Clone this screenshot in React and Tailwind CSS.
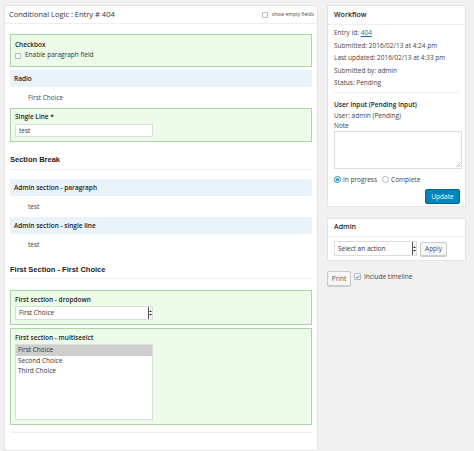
import React from 'react'

const font = { fontFamily: '"Open Sans", "Noto Sans", sans-serif' }

function GreenBox({ children, className = '' }) {
  return (
    <div className={`mx-[5px] border border-[#a9d6a4] bg-[#edfce9] px-[4px] ${className}`}>
      {children}
    </div>
  )
}

function FakeSelect({ value, className = '' }) {
  return (
    <div className={`flex items-stretch border border-[#dcdcdc] bg-white ${className}`}>
      <div className="flex flex-1 items-center pl-[3px] text-[6.5px] text-[#333]">{value}</div>
      <div className="flex w-[4px] items-center justify-center border-l border-[#555] bg-[#f7f7f7]">
        <svg width="3" height="6" viewBox="0 0 3 6">
          <path d="M0 2 L1.5 0.5 L3 2 Z M0 4 L1.5 5.5 L3 4 Z" fill="#222" />
        </svg>
      </div>
    </div>
  )
}

function BlueLabel({ children }) {
  return (
    <div className="mx-[5px] flex h-[17px] items-center bg-[#eaf2fa] px-[4px] text-[6.5px] font-semibold text-[#222]">
      {children}
    </div>
  )
}

function Value({ children }) {
  return <div className="flex h-[21px] items-center pl-[23px] text-[6.5px] text-[#444]">{children}</div>
}

function SectionHead({ children, className = '' }) {
  return (
    <div
      className={`mx-[5px] border-b border-[#eeeeee] text-[7.5px] font-bold text-[#222] ${className}`}
      style={{ fontFamily: '"Liberation Sans", Arial, sans-serif' }}
    >
      {children}
    </div>
  )
}

function Btn({ children, className = '' }) {
  return (
    <div
      className={`flex items-center justify-center rounded-[2px] border border-[#cccccc] bg-[#f7f7f7] text-[6.5px] text-[#555] shadow-[0_1px_0_#ccc] ${className}`}
    >
      {children}
    </div>
  )
}

export default function App() {
  return (
    <div className="flex h-[451px] w-[474px] overflow-hidden bg-[#f1f1f1]" style={font}>
      {/* left panel */}
      <div className="ml-[4px] mt-[5px] w-[314px] shrink-0 self-stretch border border-[#e5e5e5] bg-white">
        <div className="flex h-[18px] items-center justify-between border-b border-[#eeeeee] pl-[4px] pr-[3px]">
          <span className="text-[7.5px] text-[#333]">Conditional Logic : Entry # 404</span>
          <span className="flex items-center gap-[4px] text-[5px] text-[#444]">
            <span className="h-[6px] w-[6px] rounded-[1px] border border-[#b4b9be] bg-white" />
            show empty fields
          </span>
        </div>

        <GreenBox className="mt-[10px] h-[33px] pt-[5px]">
          <div className="text-[6.5px] font-semibold leading-[9px] text-[#222]">Checkbox</div>
          <div className="mt-[1px] flex items-center gap-[4px] text-[6.5px] leading-[10px] text-[#333]">
            <span className="h-[6px] w-[6px] translate-y-[1px] rounded-[1px] border border-[#b4b9be] bg-white" />
            Enable paragraph field
          </div>
        </GreenBox>

        <div className="mt-[3px]">
          <BlueLabel>Radio</BlueLabel>
        </div>
        <Value>First Choice</Value>

        <GreenBox className="h-[34px] pt-[3px]">
          <div className="text-[6.5px] font-semibold leading-[10px] text-[#222]">Single Line *</div>
          <div className="mt-[2px] flex h-[13px] w-[138px] items-center border border-[#dddddd] bg-white pl-[3px] text-[6.5px] text-[#333]">
            test
          </div>
        </GreenBox>

        <SectionHead className="mt-[13px] pb-[5px] leading-[9px]">Section Break</SectionHead>

        <div className="mt-[9px]">
          <BlueLabel>Admin section - paragraph</BlueLabel>
        </div>
        <Value>test</Value>
        <BlueLabel>Admin section - single line</BlueLabel>
        <Value>test</Value>

        <SectionHead className="mt-[10px] pb-[4px] leading-[9px]">First Section - First Choice</SectionHead>

        <GreenBox className="mt-[11px] h-[35px] pt-[4px]">
          <div className="text-[6.5px] font-semibold leading-[10px] text-[#222]">First section - dropdown</div>
          <FakeSelect value="First Choice" className="mt-[1px] h-[14px] w-[138px]" />
        </GreenBox>

        <GreenBox className="mt-[3px] h-[97px] pt-[4px]">
          <div className="text-[6.5px] font-semibold leading-[10px] text-[#222]">First section - multiseelct</div>
          <div className="mt-[1px] h-[76px] w-[138px] border border-[#dddddd] bg-white text-[6.5px] leading-[10.5px] text-[#333]">
            <div className="bg-[#cecece] pl-[2px]">First Choice</div>
            <div className="pl-[2px]">Second Choice</div>
            <div className="pl-[2px]">Third Choice</div>
          </div>
        </GreenBox>

        <div className="mx-[5px] mt-[7px] border-b border-[#eeeeee]" />
      </div>

      {/* right column */}
      <div className="ml-[9px] mt-[5px] flex w-[139px] shrink-0 flex-col">
        <div className="h-[202px] border border-[#e5e5e5] bg-white">
          <div className="flex h-[19px] items-center border-b border-[#eeeeee] pl-[6px] text-[7px] font-semibold text-[#222]">
            Workflow
          </div>
          <div className="px-[6px] pt-[2px] text-[6.5px] leading-[12.6px] text-[#444]">
            <div>
              Entry Id: <span className="text-[#0073aa] underline">404</span>
            </div>
            <div>Submitted: 2016/02/13 at 4:24 pm</div>
            <div>Last updated: 2016/02/13 at 4:33 pm</div>
            <div>Submitted by: admin</div>
            <div>Status: Pending</div>
          </div>
          <div className="mx-[6px] mt-[2px] border-b border-[#eeeeee]" />
          <div className="px-[6px] pt-[6px] text-[6.5px] text-[#444]">
            <div className="font-semibold leading-[11px] text-[#222]">User Input (Pending Input)</div>
            <div className="leading-[11px]">User: admin (Pending)</div>
            <div className="leading-[9px]">Note</div>
            <div className="relative mt-[1px] h-[38px] w-[128px] border border-[#dddddd] bg-white">
              <svg className="absolute bottom-[1px] right-[1px]" width="5" height="5" viewBox="0 0 5 5">
                <path d="M5 1 L1 5 M5 3 L3 5" stroke="#999" strokeWidth="0.6" />
              </svg>
            </div>
            <div className="mt-[6px] flex items-center gap-[2px] leading-[10px]">
              <span className="flex h-[7px] w-[7px] items-center justify-center rounded-full border border-[#1e8cbe] bg-white">
                <span className="h-[3px] w-[3px] rounded-full bg-[#1e8cbe]" />
              </span>
              <span className="mr-[3px]">In progress</span>
              <span className="h-[7px] w-[7px] rounded-full border border-[#b4b9be] bg-white" />
              <span>Complete</span>
            </div>
            <div className="mt-[4px] flex justify-end">
              <div className="mr-[-1px] flex h-[15px] w-[35px] items-center justify-center rounded-[2px] border border-[#006799] bg-[#0085ba] text-[6.5px] text-white">
                Update
              </div>
            </div>
          </div>
        </div>

        <div className="mt-[11px] h-[43px] border border-[#e5e5e5] bg-white">
          <div className="flex h-[18px] items-center border-b border-[#eeeeee] pl-[6px] text-[7px] font-semibold text-[#222]">
            Admin
          </div>
          <div className="mt-[4px] flex items-center gap-[3px] pl-[6px]">
            <FakeSelect value="Select an action" className="h-[15px] w-[83px]" />
            <Btn className="h-[14px] w-[27px]">Apply</Btn>
          </div>
        </div>

        <div className="mt-[10px] flex items-center gap-[3px]">
          <Btn className="h-[15px] w-[24px]">Print</Btn>
          <span className="flex h-[7px] w-[7px] -translate-y-[2px] items-center justify-center rounded-[1px] border border-[#b4b9be] bg-white">
            <svg width="6" height="6" viewBox="0 0 6 6">
              <path d="M1 3 L2.5 4.5 L5 1.2" stroke="#1e8cbe" strokeWidth="1.2" fill="none" />
            </svg>
          </span>
          <span className="-translate-y-[2px] text-[6.5px] text-[#444]">Include timeline</span>
        </div>
      </div>
    </div>
  )
}
